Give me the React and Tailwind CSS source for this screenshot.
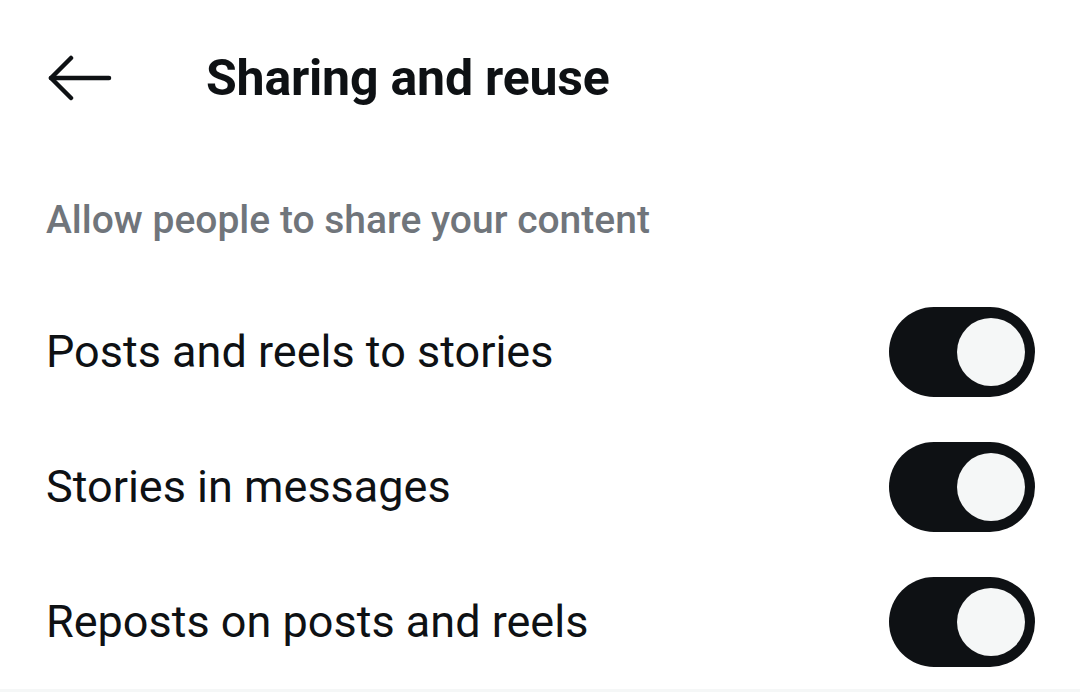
import React from 'react';

const rows = ['Posts and reels to stories', 'Stories in messages', 'Reposts on posts and reels'];

const Toggle = () => (
  <div className="w-[146px] h-[90px] rounded-full bg-[#0e1114] flex items-center justify-end pr-[10px]">
    <div className="w-[68px] h-[68px] rounded-full bg-[#f5f7f7]" />
  </div>
);

const App = () => {
  return (
    <div className="w-[1080px] h-[692px] bg-white flex flex-col font-['Roboto',sans-serif] text-[#0e1114]">
      <header className="h-[156px] flex items-center pl-[48px]">
        <svg width="64" height="46" viewBox="0 0 64 46" fill="none" stroke="#0e1114" strokeWidth="4.5" strokeLinecap="round" strokeLinejoin="round">
          <path d="M3 23H61" />
          <path d="M23 3L3 23L23 43" />
        </svg>
        <h1 className="ml-[94px] text-[50px] font-bold tracking-[-0.2px]">Sharing and reuse</h1>
      </header>
      <div className="h-[128px] flex items-center px-[46px]">
        <p className="text-[39px] font-medium text-[#70757b]">Allow people to share your content</p>
      </div>
      {rows.map((r) => (
        <div key={r} className="h-[135px] flex items-center justify-between pl-[46px] pr-[45px]">
          <span className="text-[45px]">{r}</span>
          <Toggle />
        </div>
      ))}
      <div className="flex-1 bg-[#f5f7f7]" />
    </div>
  );
};

export default App;
